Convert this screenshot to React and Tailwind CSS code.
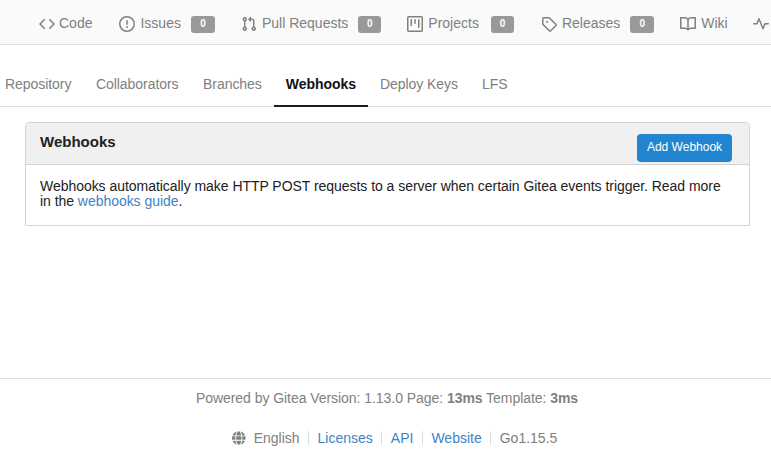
import React from "react";

const I = ({ d, className = "" }) => (
  <svg viewBox="0 0 16 16" width="16" height="16" fill="currentColor" fillRule="evenodd" className={"shrink-0 " + className}>
    <path d={d} />
  </svg>
);

const icons = {
  code: "M4.72 3.22a.75.75 0 011.06 1.06L2.06 8l3.72 3.72a.75.75 0 11-1.06 1.06L.47 8.53a.75.75 0 010-1.06l4.25-4.25zm6.56 0a.75.75 0 10-1.06 1.06L13.94 8l-3.72 3.72a.75.75 0 101.06 1.06l4.25-4.25a.75.75 0 000-1.06l-4.25-4.25z",
  issue: "M8 1.5a6.5 6.5 0 100 13 6.5 6.5 0 000-13zM0 8a8 8 0 1116 0A8 8 0 010 8zm9 3a1 1 0 11-2 0 1 1 0 012 0zm-.25-6.25a.75.75 0 00-1.5 0v3.5a.75.75 0 001.5 0v-3.5z",
  pull: "M7.177 3.073L9.573.677A.25.25 0 0110 .854v4.792a.25.25 0 01-.427.177L7.177 3.427a.25.25 0 010-.354zM3.75 2.5a.75.75 0 100 1.5.75.75 0 000-1.5zm-2.25.75a2.25 2.25 0 113 2.122v5.256a2.251 2.251 0 11-1.5 0V5.372A2.25 2.25 0 011.5 3.25zM11 2.5h-1V4h1a1 1 0 011 1v5.628a2.251 2.251 0 101.5 0V5A2.5 2.5 0 0011 2.5zm1 10.25a.75.75 0 111.5 0 .75.75 0 01-1.5 0zM3.75 12a.75.75 0 100 1.5.75.75 0 000-1.5z",
  project: "M1.75 0A1.75 1.75 0 000 1.75v12.5C0 15.216.784 16 1.75 16h12.5A1.75 1.75 0 0016 14.25V1.75A1.75 1.75 0 0014.25 0H1.75zM1.5 1.75a.25.25 0 01.25-.25h12.5a.25.25 0 01.25.25v12.5a.25.25 0 01-.25.25H1.75a.25.25 0 01-.25-.25V1.75zM11.75 3a.75.75 0 00-.75.75v7.5a.75.75 0 001.5 0v-7.5a.75.75 0 00-.75-.75zm-8.25.75a.75.75 0 011.5 0v5.5a.75.75 0 01-1.5 0v-5.5zM8 3a.75.75 0 00-.75.75v3.5a.75.75 0 001.5 0v-3.5A.75.75 0 008 3z",
  tag: "M2.5 7.775V2.75a.25.25 0 01.25-.25h5.025a.25.25 0 01.177.073l6.25 6.25a.25.25 0 010 .354l-5.025 5.025a.25.25 0 01-.354 0l-6.25-6.25a.25.25 0 01-.073-.177zm-1.5 0V2.75C1 1.784 1.784 1 2.75 1h5.025c.464 0 .91.184 1.238.513l6.25 6.25a1.75 1.75 0 010 2.474l-5.026 5.026a1.75 1.75 0 01-2.474 0l-6.25-6.25A1.75 1.75 0 011 7.775zM6 5a1 1 0 100 2 1 1 0 000-2z",
  book: "M0 1.75A.75.75 0 01.75 1h4.253c1.227 0 2.317.59 3 1.501A3.744 3.744 0 0111.006 1h4.245a.75.75 0 01.75.75v10.5a.75.75 0 01-.75.75h-4.507a2.25 2.25 0 00-1.591.659l-.622.621a.75.75 0 01-1.06 0l-.622-.621A2.25 2.25 0 005.258 13H.75a.75.75 0 01-.75-.75V1.75zm8.755 3a2.25 2.25 0 012.25-2.25H14.5v9h-3.757c-.71 0-1.4.201-1.992.572l.004-7.322zm-1.504 7.324l.004-5.073-.002-2.253A2.25 2.25 0 005.003 2.5H1.5v9h3.757a3.75 3.75 0 011.994.574z",
  pulse: "M6 2a.75.75 0 01.696.471L10 10.731l1.304-3.26A.75.75 0 0112 7h3.25a.75.75 0 010 1.5h-2.742l-1.812 4.528a.75.75 0 01-1.392 0L6 4.77 4.696 8.03A.75.75 0 014 8.5H.75a.75.75 0 010-1.5h2.742l1.812-4.529A.75.75 0 016 2z",
};

const Badge = ({ className }) => (
  <span className={"mt-[2px] h-[17px] rounded-[3px] bg-[#999999] text-white text-[10px] font-bold flex items-center justify-center leading-none " + className}>0</span>
);

const Tab = ({ icon, label, badge, ml, gap = "mr-[5px]" }) => (
  <div className={"flex items-center shrink-0 " + ml}>
    <I d={icons[icon]} className={"mt-[2px] " + gap} />
    {label && <span>{label}</span>}
    {badge && <Badge className={badge} />}
  </div>
);

const Sep = () => <span className="mx-[8.5px] w-px h-[14px] bg-[#dededf]" />;

export default function App() {
  return (
    <div className="w-[771px] h-[452px] overflow-hidden bg-white text-[14px] leading-[20px] text-[#212121] font-['Liberation_Sans',Arial,sans-serif]">
      <div className="h-[45px] bg-[#fafafa] border-b border-[#dededf] flex items-center pl-[39px] pt-[2px] overflow-hidden text-[#808080]">
        <Tab icon="code" label="Code" ml="" gap="mr-[4px]" />
        <Tab icon="issue" label="Issues" badge="ml-[10px] w-[24px]" ml="ml-[27px]" />
        <Tab icon="pull" label="Pull Requests" badge="ml-[10px] w-[23px]" ml="ml-[26px]" />
        <Tab icon="project" label="Projects" badge="ml-[12px] w-[23px]" ml="ml-[26px]" />
        <Tab icon="tag" label="Releases" badge="ml-[10px] w-[24px]" ml="ml-[27px]" />
        <Tab icon="book" label="Wiki" ml="ml-[26px]" />
        <Tab icon="pulse" ml="ml-[25px]" />
      </div>

      <div className="mt-[17px] h-[45px] border-b border-[#dededf] flex text-[#808080] tracking-[-0.05px]">
        <div className="flex pl-[5px] w-full">
          <span className="pt-[12px]">Repository</span>
          <span className="pt-[12px] ml-[24.5px]">Collaborators</span>
          <span className="pt-[12px] ml-[24.5px]">Branches</span>
          <span className="ml-[12px] px-[12px] pt-[12px] h-[45px] border-b-[2px] border-[#1b1c1d] font-bold text-[#111111]">Webhooks</span>
          <span className="pt-[12px] ml-[12px]">Deploy Keys</span>
          <span className="pt-[12px] ml-[24px]">LFS</span>
        </div>
      </div>

      <div className="mt-[15px] mx-[25px] w-[725px] h-[104px] border border-[#d4d4d5] rounded-t-[4px] overflow-hidden">
        <div className="h-[42px] bg-[#f0f0f0] border-b border-[#d4d4d5] flex justify-between pl-[14px] pr-[17px]">
          <h4 className="text-[15px] font-bold leading-[20px] pt-[9px] text-[#212121]">Webhooks</h4>
          <button className="mt-[11px] w-[95px] h-[28px] pb-[3px] rounded-[4px] bg-[#2185d0] text-white text-[12px] leading-none">Add Webhook</button>
        </div>
        <p className="pt-[14px] pl-[14px] pr-[14px] leading-[15px] text-[14px] tracking-[-0.04px] text-[#212121]">
          Webhooks automatically make HTTP POST requests to a server when certain Gitea events trigger. Read more in the <a className="text-[#4183c4]">webhooks guide</a>.
        </p>
      </div>

      <footer className="mt-[152px] border-t border-[#dededf] text-[#808080]">
        <div className="pt-[9px] pl-[3px] text-center leading-[20px] tracking-[-0.05px]">
          Powered by Gitea Version: 1.13.0 Page: <b>13ms</b> Template: <b>3ms</b>
        </div>
        <div className="mt-[20px] pl-[18px] flex items-center justify-center">
          <svg viewBox="0 0 512 512" width="14" height="14" fill="currentColor" className="mr-[8px]">
            <path d="M336.5 160C322 70.7 287.8 8 248 8s-74 62.7-88.500 152h177zM152 256c0 22.200 1.200 43.500 3.300 64h185.300c2.100-20.500 3.300-41.800 3.300-64s-1.200-43.500-3.300-64H155.300c-2.100 20.500-3.300 41.800-3.300 64zm324.700-96c-28.600-67.900-86.500-120.400-158-141.600 24.400 33.800 41.200 84.700 50 141.600h108zM177.200 18.400C105.800 39.600 47.800 92.100 19.300 160h108c8.700-56.900 25.500-107.800 49.900-141.600zM487.400 192H372.700c2.100 21 3.300 42.500 3.300 64s-1.200 43-3.300 64h114.600c5.500-20.500 8.600-41.800 8.600-64s-3.100-43.500-8.500-64zM120 256c0-21.500 1.200-43 3.300-64H8.600C3.200 212.500 0 233.800 0 256s3.200 43.500 8.600 64h114.600c-2-21-3.200-42.500-3.200-64zm39.500 96c14.500 89.300 48.700 152 88.500 152s74-62.700 88.500-152h-177zm159.300 141.600c71.400-21.200 129.400-73.700 158-141.600h-108c-8.800 56.900-25.600 107.800-50 141.600zM19.300 352c28.600 67.900 86.500 120.400 158 141.600-24.400-33.800-41.200-84.700-50-141.600h-108z" />
          </svg>
          <span>English</span>
          <Sep />
          <a className="text-[#4183c4]">Licenses</a>
          <Sep />
          <a className="text-[#4183c4]">API</a>
          <Sep />
          <a className="text-[#4183c4]">Website</a>
          <Sep />
          <span>Go1.15.5</span>
        </div>
      </footer>
    </div>
  );
}
